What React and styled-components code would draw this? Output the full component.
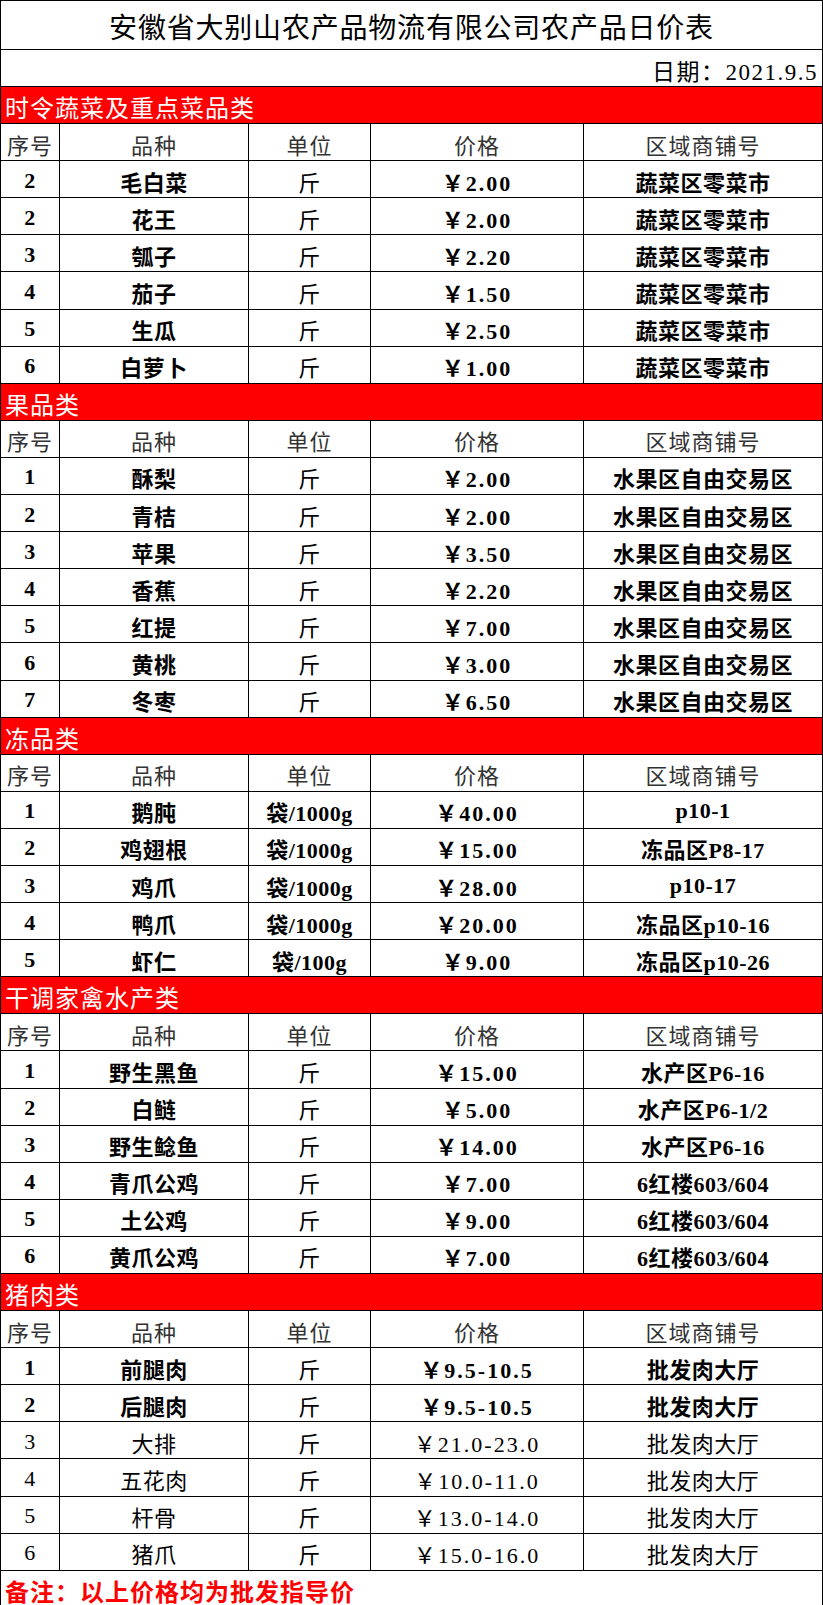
import React from "react";
import styled, { createGlobalStyle } from "styled-components";

const GlobalStyle = createGlobalStyle`
  html, body {
    margin: 0;
    padding: 0;
    background: #fff;
    overflow: hidden;
  }
  * {
    box-sizing: border-box;
  }
`;

const FONT = `"Liberation Serif", "Noto Sans CJK SC", serif`;
const COLS = "59px 189px 122px 213px 239px";
const ROW_H = 37.1;

//data
const sections = [
  {
    title: "时令蔬菜及重点菜品类",
    rows: [
      ["2", "毛白菜", "斤", "￥2.00", "蔬菜区零菜市"],
      ["2", "花王", "斤", "￥2.00", "蔬菜区零菜市"],
      ["3", "瓠子", "斤", "￥2.20", "蔬菜区零菜市"],
      ["4", "茄子", "斤", "￥1.50", "蔬菜区零菜市"],
      ["5", "生瓜", "斤", "￥2.50", "蔬菜区零菜市"],
      ["6", "白萝卜", "斤", "￥1.00", "蔬菜区零菜市"],
    ],
  },
  {
    title: "果品类",
    rows: [
      ["1", "酥梨", "斤", "￥2.00", "水果区自由交易区"],
      ["2", "青桔", "斤", "￥2.00", "水果区自由交易区"],
      ["3", "苹果", "斤", "￥3.50", "水果区自由交易区"],
      ["4", "香蕉", "斤", "￥2.20", "水果区自由交易区"],
      ["5", "红提", "斤", "￥7.00", "水果区自由交易区"],
      ["6", "黄桃", "斤", "￥3.00", "水果区自由交易区"],
      ["7", "冬枣", "斤", "￥6.50", "水果区自由交易区"],
    ],
  },
  {
    title: "冻品类",
    rows: [
      ["1", "鹅肫", "袋/1000g", "￥40.00", "p10-1"],
      ["2", "鸡翅根", "袋/1000g", "￥15.00", "冻品区P8-17"],
      ["3", "鸡爪", "袋/1000g", "￥28.00", "p10-17"],
      ["4", "鸭爪", "袋/1000g", "￥20.00", "冻品区p10-16"],
      ["5", "虾仁", "袋/100g", "￥9.00", "冻品区p10-26"],
    ],
  },
  {
    title: "干调家禽水产类",
    rows: [
      ["1", "野生黑鱼", "斤", "￥15.00", "水产区P6-16"],
      ["2", "白鲢", "斤", "￥5.00", "水产区P6-1/2"],
      ["3", "野生鲶鱼", "斤", "￥14.00", "水产区P6-16"],
      ["4", "青爪公鸡", "斤", "￥7.00", "6红楼603/604"],
      ["5", "土公鸡", "斤", "￥9.00", "6红楼603/604"],
      ["6", "黄爪公鸡", "斤", "￥7.00", "6红楼603/604"],
    ],
  },
  {
    title: "猪肉类",
    rows: [
      ["1", "前腿肉", "斤", "￥9.5-10.5", "批发肉大厅"],
      ["2", "后腿肉", "斤", "￥9.5-10.5", "批发肉大厅"],
      ["3", "大排", "斤", "￥21.0-23.0", "批发肉大厅", true],
      ["4", "五花肉", "斤", "￥10.0-11.0", "批发肉大厅", true],
      ["5", "杆骨", "斤", "￥13.0-14.0", "批发肉大厅", true],
      ["6", "猪爪", "斤", "￥15.0-16.0", "批发肉大厅", true],
    ],
  },
];

const headers = ["序号", "品种", "单位", "价格", "区域商铺号"];

const App = () => {
  return (
    <>
      <GlobalStyle />
      <Sheet>
        <TitleRow>安徽省大别山农产品物流有限公司农产品日价表</TitleRow>
        <DateRow>日期：2021.9.5</DateRow>
        {sections.map((section) => (
          <React.Fragment key={section.title}>
            <SectionRow>{section.title}</SectionRow>
            <Row>
              {headers.map((h) => (
                <HeadCell key={h}>{h}</HeadCell>
              ))}
            </Row>
            {section.rows.map((r, i) => (
              <Row key={i}>
                <Cell $thin={r[5]}>{r[0]}</Cell>
                <Cell $thin={r[5]}>{r[1]}</Cell>
                <Cell $thin={r[5] || r[2] === "斤"}>{r[2]}</Cell>
                <Cell $thin={r[5]} $price>
                  {r[3]}
                </Cell>
                <Cell $thin={r[5]}>{r[4]}</Cell>
              </Row>
            ))}
          </React.Fragment>
        ))}
        <Footer>备注：以上价格均为批发指导价</Footer>
      </Sheet>
    </>
  );
};

const Sheet = styled.div`
  width: 823px;
  display: flex;
  flex-direction: column;
  border-left: 1px solid #000;
  border-top: 1px solid #000;
  font-family: ${FONT};
  color: #000;
`;

const TitleRow = styled.div`
  height: 49px;
  display: flex;
  align-items: center;
  justify-content: center;
  border-right: 1px solid #000;
  border-bottom: 1px solid #000;
  font-size: 28px;
  letter-spacing: 0.8px;
  padding-top: 2px;
`;

const DateRow = styled.div`
  height: 37px;
  display: flex;
  align-items: center;
  justify-content: flex-end;
  padding-right: 4px;
  padding-top: 4px;
  border-right: 1px solid #000;
  border-bottom: 1px solid #000;
  font-size: 23px;
  letter-spacing: 1.5px;
`;

const SectionRow = styled.div`
  height: ${ROW_H}px;
  display: flex;
  align-items: center;
  padding-left: 4px;
  padding-top: 3px;
  background: #ff0000;
  color: #fff;
  border-right: 1px solid #000;
  border-bottom: 1px solid #000;
  font-size: 24px;
  letter-spacing: 1px;
`;

const Row = styled.div`
  height: ${ROW_H}px;
  display: grid;
  grid-template-columns: ${COLS};
`;

const Cell = styled.div`
  display: flex;
  align-items: center;
  justify-content: center;
  padding-top: 3px;
  border-right: 1px solid #000;
  border-bottom: 1px solid #000;
  font-size: 22px;
  font-weight: ${(p) => (p.$thin ? 400 : 700)};
  letter-spacing: ${(p) => (p.$price ? "2px" : "0.5px")};
  white-space: nowrap;
`;

const HeadCell = styled(Cell)`
  font-weight: 400;
  color: #333;
  letter-spacing: 1px;
`;

const Footer = styled.div`
  height: 35px;
  display: flex;
  align-items: center;
  padding-left: 4px;
  padding-top: 4px;
  border-right: 1px solid #000;
  color: #ff0000;
  font-size: 24px;
  font-weight: 700;
  letter-spacing: 1px;
`;

export default App;
